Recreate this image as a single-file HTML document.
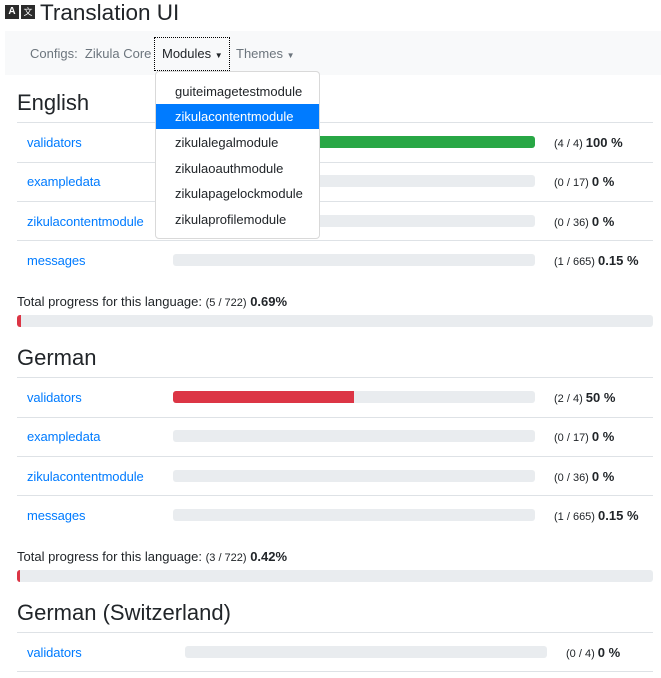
<!DOCTYPE html>
<html><head><meta charset="utf-8"><style>
*{margin:0;padding:0;box-sizing:border-box}
body{width:661px;height:678px;overflow:hidden;background:#fff;font-family:"Liberation Sans","Noto Sans CJK SC",sans-serif;color:#212529;position:relative}
.a{position:absolute;white-space:nowrap}
.link{color:#007bff;font-size:13px;letter-spacing:-0.1px}
.line{position:absolute;left:17px;right:8px;height:1px;background:#dee2e6}
.bar{position:absolute;height:12px;background:#e9ecef;border-radius:3px;overflow:hidden}
.bar i{display:block;height:100%}
.pc{font-size:11px}
.pc b{font-size:13px}
h2{position:absolute;font-weight:400;font-size:22px;left:17px}
.ti{font-size:13px}
.dd div{position:absolute;left:0;width:163px;height:25px;padding-left:19px;font-size:13px;line-height:25px;color:#212529}
</style></head><body>
<div class="a" style="left:5px;top:5px;width:14px;height:14px;background:#2b2b2b;color:#fff;font-size:10px;font-weight:700;text-align:center;line-height:14px">A</div>
<div class="a" style="left:21px;top:5px;width:14px;height:14px;background:#2b2b2b;color:#fff;font-size:9px;text-align:center;line-height:14px">文</div>
<div class="a" style="left:40px;top:0px;font-size:22.5px">Translation UI</div>

<div class="a" style="left:5px;top:31px;width:656px;height:44px;background:#f8f9fa"></div>
<div class="a" style="left:30px;top:46px;font-size:13px;color:#6c757d">Configs:&nbsp; Zikula Core</div>
<div class="a" style="left:154px;top:37px;width:76px;height:34px;border:1px dotted #000"></div>
<div class="a" style="left:162px;top:46px;font-size:13px;color:#212529">Modules <span style="font-size:8px">▼</span></div>
<div class="a" style="left:236px;top:46px;font-size:13px;color:#6c757d">Themes <span style="font-size:8px">▼</span></div>

<h2 style="top:90px">English</h2>
<div class="line" style="top:122px"></div>
<div class="a link" style="left:27px;top:135px">validators</div>
<div class="bar" style="left:173px;top:136px;width:362px"><i style="width:100%;background:#28a745"></i></div>
<div class="a pc" style="left:554px;top:135px">(4 / 4) <b>100 %</b></div>
<div class="line" style="top:162px"></div>
<div class="a link" style="left:27px;top:174px">exampledata</div>
<div class="bar" style="left:173px;top:175px;width:362px"></div>
<div class="a pc" style="left:554px;top:174px">(0 / 17) <b>0 %</b></div>
<div class="line" style="top:201px"></div>
<div class="a link" style="left:27px;top:214px">zikulacontentmodule</div>
<div class="bar" style="left:173px;top:215px;width:362px"></div>
<div class="a pc" style="left:554px;top:214px">(0 / 36) <b>0 %</b></div>
<div class="line" style="top:240px"></div>
<div class="a link" style="left:27px;top:253px">messages</div>
<div class="bar" style="left:173px;top:254px;width:362px"></div>
<div class="a pc" style="left:554px;top:253px">(1 / 665) <b>0.15 %</b></div>
<div class="a ti" style="left:17px;top:294px">Total progress for this language: <span style="font-size:11px">(5 / 722)</span> <b>0.69%</b></div>
<div class="bar" style="left:17px;top:315px;width:636px"><i style="width:4px;background:#dc3545"></i></div>

<h2 style="top:345px">German</h2>
<div class="line" style="top:377px"></div>
<div class="a link" style="left:27px;top:390px">validators</div>
<div class="bar" style="left:173px;top:391px;width:362px"><i style="width:50%;background:#dc3545"></i></div>
<div class="a pc" style="left:554px;top:390px">(2 / 4) <b>50 %</b></div>
<div class="line" style="top:417px"></div>
<div class="a link" style="left:27px;top:429px">exampledata</div>
<div class="bar" style="left:173px;top:430px;width:362px"></div>
<div class="a pc" style="left:554px;top:429px">(0 / 17) <b>0 %</b></div>
<div class="line" style="top:456px"></div>
<div class="a link" style="left:27px;top:469px">zikulacontentmodule</div>
<div class="bar" style="left:173px;top:470px;width:362px"></div>
<div class="a pc" style="left:554px;top:469px">(0 / 36) <b>0 %</b></div>
<div class="line" style="top:495px"></div>
<div class="a link" style="left:27px;top:508px">messages</div>
<div class="bar" style="left:173px;top:509px;width:362px"></div>
<div class="a pc" style="left:554px;top:508px">(1 / 665) <b>0.15 %</b></div>
<div class="a ti" style="left:17px;top:549px">Total progress for this language: <span style="font-size:11px">(3 / 722)</span> <b>0.42%</b></div>
<div class="bar" style="left:17px;top:570px;width:636px"><i style="width:3px;background:#dc3545"></i></div>

<h2 style="top:600px">German (Switzerland)</h2>
<div class="line" style="top:632px"></div>
<div class="a link" style="left:27px;top:645px">validators</div>
<div class="bar" style="left:185px;top:646px;width:362px"></div>
<div class="a pc" style="left:566px;top:645px">(0 / 4) <b>0 %</b></div>
<div class="line" style="top:671px"></div>

<div class="a dd" style="left:155px;top:71px;width:165px;height:168px;background:#fff;border:1px solid rgba(0,0,0,.15);border-radius:4px">
<div style="top:7px">guiteimagetestmodule</div>
<div style="top:32px;background:#007bff;color:#fff">zikulacontentmodule</div>
<div style="top:58px">zikulalegalmodule</div>
<div style="top:84px">zikulaoauthmodule</div>
<div style="top:109px">zikulapagelockmodule</div>
<div style="top:135px">zikulaprofilemodule</div>
</div>
</body></html>
